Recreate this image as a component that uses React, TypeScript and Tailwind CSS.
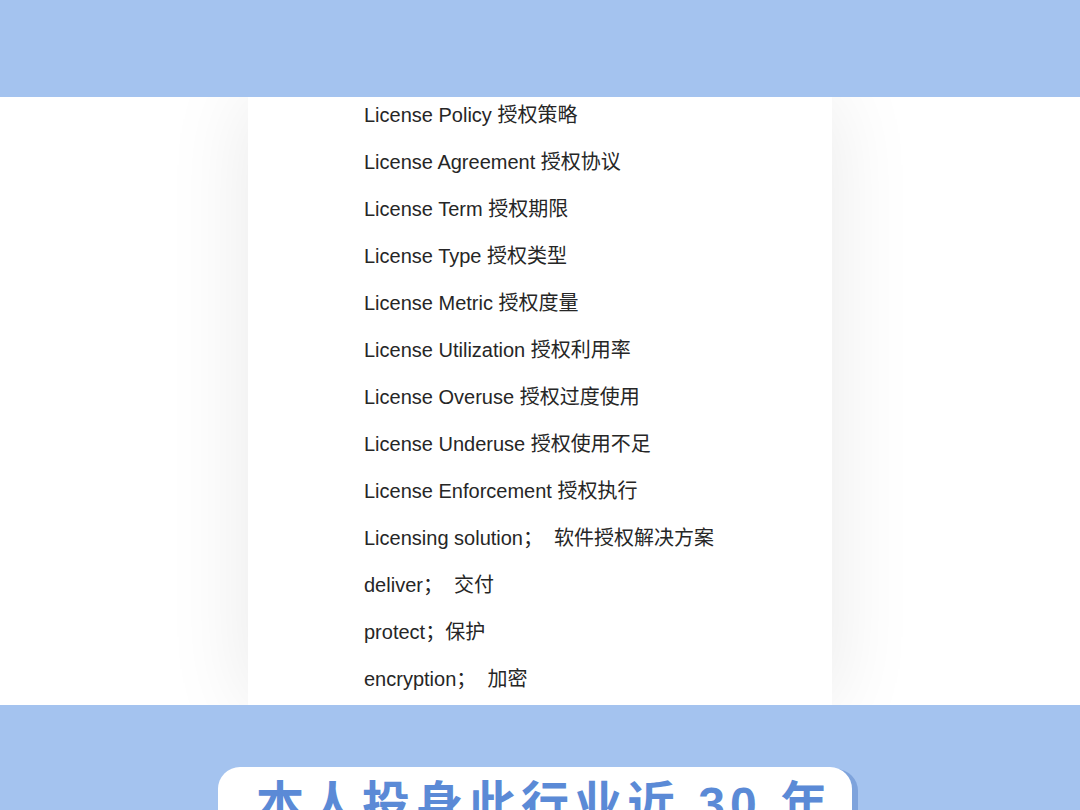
const rows = [
  "License Policy 授权策略",
  "License Agreement 授权协议",
  "License Term 授权期限",
  "License Type 授权类型",
  "License Metric 授权度量",
  "License Utilization 授权利用率",
  "License Overuse 授权过度使用",
  "License Underuse 授权使用不足",
  "License Enforcement 授权执行",
  "Licensing solution；  软件授权解决方案",
  "deliver；  交付",
  "protect；保护",
  "encryption；  加密",
];

export default function App() {
  return (
    <div className="w-[1080px] h-[810px] overflow-hidden bg-white flex flex-col" style={{ fontFamily: '"Liberation Sans", "Noto Sans CJK SC", sans-serif' }}>
      <div className="relative z-10 h-[97px] shrink-0 bg-[#a4c3ef]" />
      <div className="h-[608px] shrink-0 flex justify-center bg-white">
        <div className="w-[584px] h-full bg-white shadow-[0_0_80px_rgba(0,0,0,0.09)] pl-[116px] pt-[8px] flex flex-col gap-[26px] overflow-hidden">
          {rows.map((r) => (
            <div key={r} className="text-[20px] leading-[21px] text-[#262626] whitespace-pre">{r}</div>
          ))}
        </div>
      </div>
      <div className="relative z-10 flex-1 bg-[#a4c3ef] pt-[62px] pl-[218px]">
        <div className="w-[634px] h-[80px] bg-white rounded-[22px] shadow-[6px_2px_0_#7ea3dc] pl-[38px] pt-[14px]">
          <div className="text-[48px] font-bold text-[#5b8ad6] leading-none tracking-[5px] whitespace-nowrap">本人投身此行业近 30 年</div>
        </div>
      </div>
    </div>
  );
}
